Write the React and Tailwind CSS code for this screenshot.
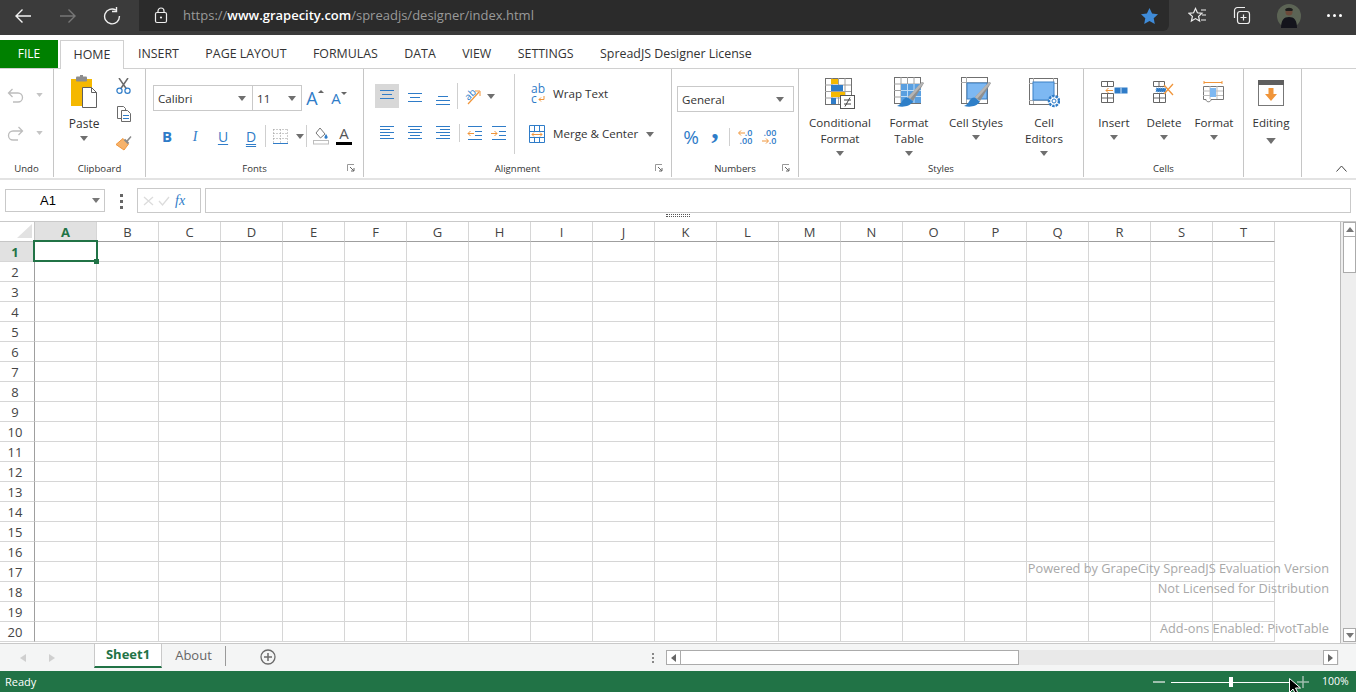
import React from 'react';

const BLUE = '#2f7cc8';
const ORANGE = '#f0953a';

const columns = ['A','B','C','D','E','F','G','H','I','J','K','L','M','N','O','P','Q','R','S','T'];
const rows = Array.from({ length: 20 }, (_, i) => i + 1);

const Caret = ({ w = 8, h = 5, color = '#6f6f6f' }) => (
    <svg width={w} height={h} viewBox="0 0 8 5" className="shrink-0"><path d="M0 0h8L4 5z" fill={color} /></svg>
);

const Lines = ({ ys, xs }) => (
    <svg width="16" height="18" viewBox="0 0 16 18">
        {ys.map((y, i) => (
            <path key={i} d={`M${xs[i][0]} ${y}.5H${xs[i][1]}`} stroke={BLUE} />
        ))}
    </svg>
);

const Launcher = () => (
    <svg width="8" height="8" viewBox="0 0 8 8" className="mb-1"><path d="M.5 7V.5H7" stroke="#999" fill="none" /><path d="M3 3l4 4M7 4v3H4" stroke="#666" fill="none" /></svg>
);

const VSep = ({ h = 'h-[26px]' }) => <div className={`w-px bg-[#cfcfcf] ${h}`} />;

// ribbon group with its bottom caption
function Group({ w, label, launcher, children }) {
    return (
        <div className={`${w} h-[108px] shrink-0 flex flex-col border-r border-[#c6c6c6]`}>
            <div className="h-[92px]">{children}</div>
            <div className="h-4 pt-px grid grid-cols-[1fr_auto_1fr] items-center text-[9.6px] text-[#333]">
                <span />
                <span>{label}</span>
                {launcher ? <span className="justify-self-end pr-2 flex"><Launcher /></span> : <span />}
            </div>
        </div>
    );
}

const TableGlyph = ({ children }) => (
    <svg width="32" height="32" viewBox="0 0 32 32">{children}</svg>
);

const GridLines = ({ x = 1, y = 1, w = 26, h = 26, cols = 4, rws = 4 }) => (
    <g fill="none">
        <rect x={x + 0.5} y={y + 0.5} width={w} height={h} stroke="#707070" />
        {Array.from({ length: cols - 1 }, (_, i) => <path key={i} d={`M${x + 0.5 + (w / cols) * (i + 1)} ${y}v${h}`} stroke="#a0a0a0" />)}
        {Array.from({ length: rws - 1 }, (_, i) => <path key={i} d={`M${x} ${y + 0.5 + (h / rws) * (i + 1)}h${w}`} stroke="#a0a0a0" />)}
    </g>
);

const Brush = () => (
    <g>
        <path d="M31 6l-2-1L15 20l5 4z" fill="#8f8f8f" />
        <path d="M31 6l-2-1L15 20l2 2z" fill="#b5b5b5" />
        <path d="M14.500 20.500c-2.500 0-4.500 2-5.500 4-1 2.500-3 3.500-5 4.500 6 1.500 13 .5 16-4.500z" fill="#2f7fc8" />
    </g>
);

const BigButton = ({ w, icon, lines }) => (
    <div className={`${w} flex flex-col items-center shrink-0`}>
        <div className="h-[32px] flex items-center justify-center mb-[6px]">{icon}</div>
        {lines.map(l => <div key={l} className="leading-4 whitespace-nowrap">{l}</div>)}
        <div className="mt-1 flex"><Caret /></div>
    </div>
);

const SmallCells = ({ w, icon, label }) => (
    <div className={`${w} flex flex-col items-center shrink-0`}>
        <div className="h-[22px] flex items-center justify-center mb-3">{icon}</div>
        <div className="leading-4">{label}</div>
        <div className="mt-1 flex"><Caret /></div>
    </div>
);

function BrowserBar() {
    return (
        <div className="h-[35px] bg-[#3b3b3b] flex items-start text-white">
            <div className="w-[139px] h-[31px] flex items-center shrink-0">
                <svg width="18" height="16" viewBox="0 0 18 16" className="ml-[14px]"><path d="M17 8H2M8.500 1.500L2 8l6.500 6.500" stroke="#f2f2f2" strokeWidth="1.400" fill="none" /></svg>
                <svg width="18" height="16" viewBox="0 0 18 16" className="ml-[27px]"><path d="M1 8h15M9.500 1.500L16 8l-6.500 6.500" stroke="#777" strokeWidth="1.400" fill="none" /></svg>
                <svg width="18" height="18" viewBox="0 0 18 18" className="ml-[26px]"><path d="M13 3.200A7.400 7.400 0 1 0 16.400 9" stroke="#eee" strokeWidth="1.400" fill="none" /><path d="M13.500 0v4.500H9" stroke="#eee" strokeWidth="1.400" fill="none" /></svg>
            </div>
            <div className="w-[1030px] h-[31px] bg-[#2b2b2b] rounded-br-md flex items-center shrink-0">
                <svg width="14" height="17" viewBox="0 0 14 17" className="ml-[15px]"><rect x="1.500" y="5.500" width="11" height="10" rx="1.500" stroke="#eee" fill="none" strokeWidth="1.200" /><path d="M4 5.500V4a3 3 0 0 1 6 0v1.500" stroke="#eee" fill="none" strokeWidth="1.200" /><circle cx="7" cy="10.500" r="1.100" fill="#eee" /></svg>
                <div className="ml-[15px] text-[13px] text-[#9a9a9a] whitespace-nowrap">
                    https://<span className="text-white font-semibold">www.grapecity.com</span>/spreadjs/designer/index.html
                </div>
                <svg width="17" height="16" viewBox="0 0 17 16" className="ml-auto mr-[11px]"><path d="M8.500 0l2.600 5.400 5.900.8-4.300 4.100 1.100 5.700-5.300-2.900-5.300 2.900 1.100-5.700L0 6.200l5.900-.8z" fill="#3f8bd8" /></svg>
            </div>
            <div className="flex-1 h-[31px] flex items-center">
                <svg width="19" height="18" viewBox="0 0 19 18" className="ml-[19px]"><path d="M7.500 1.500l1.900 4.300 4.600.5-3.400 3.100 1 4.600-4.100-2.400-4.100 2.400 1-4.600L1 6.300l4.600-.5zM13 3h5M14 8h4M13 13h5" stroke="#eee" strokeWidth="1.200" fill="none" /></svg>
                <svg width="18" height="19" viewBox="0 0 18 19" className="ml-[26px]"><path d="M12 1.500H4.500A3 3 0 0 0 1.500 4.500V12" stroke="#eee" strokeWidth="1.200" fill="none" /><rect x="4.500" y="5.500" width="12" height="12" rx="2.500" stroke="#eee" strokeWidth="1.200" fill="none" /><path d="M10.500 8.500v6M7.500 11.500h6" stroke="#eee" strokeWidth="1.200" /></svg>
                <svg width="24" height="24" viewBox="0 0 24 24" className="ml-[26px]">
                    <circle cx="12" cy="12" r="12" fill="#5c6455" />
                    <path d="M4 24c0-8 3-11 8-11s8 3 8 11z" fill="#14141c" />
                    <circle cx="12" cy="8" r="3.500" fill="#6b4a3a" />
                    <path d="M8 6c1-3 7-3 8 0l-1 1H9z" fill="#1c1c1c" />
                </svg>
                <div className="ml-[26px] flex gap-[3px]">
                    <span className="w-[3px] h-[3px] rounded-full bg-white" />
                    <span className="w-[3px] h-[3px] rounded-full bg-white" />
                    <span className="w-[3px] h-[3px] rounded-full bg-white" />
                </div>
            </div>
        </div>
    );
}

function RibbonTabs() {
    const tabs = ['INSERT', 'PAGE LAYOUT', 'FORMULAS', 'DATA', 'VIEW', 'SETTINGS', 'SpreadJS Designer License'];
    return (
        <div className="h-[34px] pt-[5px] flex items-end border-b border-[#d0d0d0] text-[12.4px] text-[#333]">
            <div className="w-[58px] h-[28px] bg-[#008000] text-white text-[12px] flex items-center justify-center">FILE</div>
            <div className="w-[64px] h-[29px] ml-[2px] -mb-px bg-white border border-b-0 border-[#d0d0d0] flex items-center justify-center">HOME</div>
            <div className="flex ml-[14px] gap-[26.4px] h-[28px] items-center whitespace-nowrap">
                {tabs.map(t => <span key={t}>{t}</span>)}
            </div>
        </div>
    );
}

function Ribbon() {
    return (
        <div className="flex h-[108px] text-[11.6px] text-[#333]">
            <Group w="w-[54px]" label="Undo">
                <div className="flex items-center h-4 mt-[18px] pl-[7px]">
                    <svg width="17" height="15" viewBox="0 0 17 15"><path d="M5.500 1L1.500 5l4 4M2 5h9a4.500 4.500 0 0 1 0 9H6" stroke="#bdbdbd" strokeWidth="1.300" fill="none" /></svg>
                    <span className="ml-[12px] flex"><Caret w={7} h={4} color="#c4c4c4" /></span>
                </div>
                <div className="flex items-center h-4 mt-[22px] pl-[7px]">
                    <svg width="17" height="15" viewBox="0 0 17 15"><path d="M11.500 1l4 4-4 4M15 5H6a4.500 4.500 0 0 0 0 9h5" stroke="#bdbdbd" strokeWidth="1.300" fill="none" /></svg>
                    <span className="ml-[12px] flex"><Caret w={7} h={4} color="#c4c4c4" /></span>
                </div>
            </Group>
            <Group w="w-[92px]" label="Clipboard">
                <div className="flex">
                    <div className="w-[60px] flex flex-col items-center pl-[1px]">
                        <svg width="27" height="33" viewBox="0 0 27 33" className="mt-[6px] ml-px">
                            <rect x="0" y="4" width="21" height="27" fill="#f5b800" />
                            <rect x="5" y="1.500" width="11" height="5" rx="1" fill="#8d8d8d" />
                            <rect x="9" y="0" width="3" height="3" fill="#8d8d8d" />
                            <path d="M11.500 12.500h9l5 5v15h-14z" fill="#fff" stroke="#5f5f5f" />
                            <path d="M20.500 12.500v5h5" fill="none" stroke="#5f5f5f" />
                        </svg>
                        <div className="mt-[8px] leading-4 text-[12px]">Paste</div>
                        <div className="mt-[4px] flex"><Caret /></div>
                    </div>
                    <div className="flex flex-col items-center w-[32px] pt-[9px] pr-[12px]">
                        <svg width="15" height="16" viewBox="0 0 15 16" className="shrink-0">
                            <path d="M3 0l7.500 11M12 0L4.500 11" stroke="#6b6b6b" strokeWidth="1.500" />
                            <circle cx="3.500" cy="12.800" r="2.600" fill="none" stroke={BLUE} strokeWidth="1.200" />
                            <circle cx="11.500" cy="12.800" r="2.600" fill="none" stroke={BLUE} strokeWidth="1.200" />
                        </svg>
                        <svg width="15" height="16" viewBox="0 0 15 16" className="mt-[12px] shrink-0">
                            <path d="M6.500 12.500h-5v-12h6l2 2v2" fill="#fff" stroke="#6b6b6b" />
                            <path d="M5.500 4.500h6l3 3v8h-9z" fill="#fff" stroke="#6b6b6b" />
                            <path d="M7 9.500h6M7 12.500h6" stroke={BLUE} />
                        </svg>
                        <svg width="17" height="17" viewBox="0 0 17 17" className="mt-[13px] shrink-0">
                            <path d="M11 6l4.500-5 1 1L12 7.500z" fill="#8a8a8a" />
                            <path d="M8 3.500l5.500 5.500L9 15 1 9.500z" fill="#f6b26b" stroke={ORANGE} />
                            <path d="M9.500 4.500l4 4" stroke="#8a8a8a" strokeWidth="2" />
                        </svg>
                    </div>
                </div>
            </Group>
            <Group w="w-[218px]" label="Fonts" launcher>
                <div className="flex items-center h-[26px] mt-4 ml-[7px]">
                    <div className="w-[100px] h-full border border-[#c9c9c9] flex items-center pl-1 pr-[6px] pt-px justify-between"><span>Calibri</span><Caret /></div>
                    <div className="w-[50px] h-full -ml-px border border-[#c9c9c9] flex items-center pl-1 pr-[5px] pt-px justify-between"><span>11</span><Caret /></div>
                    <div className="w-[24px] ml-px flex justify-center text-[#2f7cc8] text-[18px] leading-none">A<span className="w-0 h-0 border-x-[3px] border-x-transparent border-b-[3px] border-b-[#666] mt-px" /></div>
                    <div className="w-[24px] flex justify-center text-[#2f7cc8] text-[15px] leading-none">A<span className="w-0 h-0 border-x-[3px] border-x-transparent border-t-[3px] border-t-[#666] mt-px" /></div>
                </div>
                <div className="flex items-center h-[26px] mt-[12px] ml-[7px] text-[#2f7cc8]">
                    <span className="w-[28px] text-center font-bold text-[15px]">B</span>
                    <span className="w-[28px] text-center italic text-[14px] [font-family:'Liberation_Serif',serif]">I</span>
                    <span className="w-[28px] text-center text-[14px] underline underline-offset-2">U</span>
                    <span className="w-[28px] text-center text-[14px] underline decoration-double underline-offset-2">D</span>
                    <VSep h="h-[22px]" />
                    <span className="w-[28px] flex justify-center">
                        <svg width="15" height="15" viewBox="0 0 15 15"><path d="M.5 .5h14M.5 4.500h14M.5 9.500h14M.5 .5v14M7.500 .5v14M14.500 .5v14" stroke="#999" strokeDasharray="1 2" fill="none" /><path d="M0 14.500h15" stroke={BLUE} /></svg>
                    </span>
                    <span className="w-[12px] flex justify-center"><Caret /></span>
                    <VSep h="h-[22px]" />
                    <span className="w-[27px] flex justify-center">
                        <svg width="16" height="18" viewBox="0 0 16 18"><path d="M7 1l5 6-4.500 4L3 6z" fill="#fff" stroke="#777" /><path d="M13 7c1 1.500 1.500 2.500 1.500 3.200a1.500 1.500 0 0 1-3 0c0-.7.500-1.700 1.500-3.200z" fill={BLUE} /><rect x=".5" y="13.500" width="15" height="3.500" fill="#fff" stroke="#bdbdbd" /></svg>
                    </span>
                    <span className="w-[20px] flex flex-col items-center text-[#555] text-[15px] leading-[15px] -mt-px">A<span className="w-[16px] h-[3px] bg-black mt-px" /></span>
                </div>
            </Group>
            <Group w="w-[308px]" label="Alignment" launcher>
                <div className="flex">
                    <div className="w-[151px] shrink-0 border-r border-[#cfcfcf] h-[80px] mt-[5px] -mr-px">
                        <div className="flex items-center h-[24px] mt-[10px] ml-[9px]">
                            <span className="w-[28px] flex justify-center"><span className="w-6 h-6 bg-[#d8d8d8] flex items-center justify-center"><Lines ys={[3, 7, 11]} xs={[[1, 15], [3, 13], [1, 15]]} /></span></span>
                            <span className="w-[28px] flex justify-center"><Lines ys={[6, 10, 14]} xs={[[1, 15], [3, 13], [1, 15]]} /></span>
                            <span className="w-[28px] flex justify-center"><Lines ys={[9, 13, 17]} xs={[[3, 13], [1, 15], [1, 15]]} /></span>
                            <VSep />
                            <span className="w-[28px] flex justify-center">
                                <span className="relative w-[17px] h-[18px] flex items-center justify-center">
                                    <span className="-rotate-45 text-[#2f7cc8] text-[10px] leading-none -translate-x-[2px] -translate-y-[2px]">ab</span>
                                    <svg width="17" height="18" viewBox="0 0 17 18" className="absolute inset-0"><path d="M4 17L15 5" stroke={ORANGE} strokeWidth="1.200" /><path d="M11 4h5v5" stroke={ORANGE} fill="none" /></svg>
                                </span>
                            </span>
                            <span className="w-[10px] flex justify-center"><Caret /></span>
                        </div>
                        <div className="flex items-center h-[24px] mt-[13px] ml-[9px]">
                            <span className="w-[28px] flex justify-center"><Lines ys={[2, 5, 8, 11, 14]} xs={[[1, 15], [1, 11], [1, 15], [1, 11], [1, 15]]} /></span>
                            <span className="w-[28px] flex justify-center"><Lines ys={[2, 5, 8, 11, 14]} xs={[[1, 15], [3, 13], [1, 15], [3, 13], [1, 15]]} /></span>
                            <span className="w-[28px] flex justify-center"><Lines ys={[2, 5, 8, 11, 14]} xs={[[1, 15], [5, 15], [1, 15], [5, 15], [1, 15]]} /></span>
                            <span className="ml-[2px] flex"><VSep h="h-[18px]" /></span>
                            <span className="w-[24px] ml-[3px] flex justify-center">
                                <svg width="16" height="16" viewBox="0 0 16 16"><path d="M1 1.500h14M8 6.500h7M8 10.500h7M1 14.500h14" stroke={BLUE} /><path d="M7 8.500H1M3.500 6L1 8.500 3.500 11" stroke={ORANGE} fill="none" /></svg>
                            </span>
                            <span className="w-[24px] flex justify-center">
                                <svg width="16" height="16" viewBox="0 0 16 16"><path d="M1 1.500h14M8 6.500h7M8 10.500h7M1 14.500h14" stroke={BLUE} /><path d="M0 8.500h6M3.500 6L6 8.500 3.500 11" stroke={ORANGE} fill="none" /></svg>
                            </span>
                        </div>
                    </div>
                    <div className="flex-1 pl-[15px]">
                        <div className="flex items-center mt-[15px] h-[20px]">
                            <span className="w-[16px] pl-[2px] flex flex-col text-[#2f7cc8] text-[12px] leading-[10px]">
                                <span>ab</span>
                                <span className="flex items-center">c
                                    <svg width="7" height="6" viewBox="0 0 7 6" className="ml-px"><path d="M6 0v3.500H1M3 1.500L1 3.500l2 2" stroke={ORANGE} fill="none" /></svg>
                                </span>
                            </span>
                            <span className="ml-[8px]">Wrap Text</span>
                        </div>
                        <div className="flex items-center mt-[20px] h-[20px]">
                            <svg width="16" height="18" viewBox="0 0 16 18"><path d="M.5 .5h15v17H.5zM.5 6.500h15M.5 12.500h15M5.500 .5v6M10.500 .5v6M5.500 12.500v5M10.500 12.500v5" stroke={BLUE} fill="none" /><path d="M3 9.500h10M5 7.500l-2 2 2 2M11 7.500l2 2-2 2" stroke={ORANGE} fill="none" /></svg>
                            <span className="ml-[8px]">Merge &amp; Center</span>
                            <span className="ml-[8px] flex"><Caret /></span>
                        </div>
                    </div>
                </div>
            </Group>
            <Group w="w-[127px]" label="Numbers" launcher>
                <div className="w-[117px] h-[26px] ml-[5px] mt-[17px] border border-[#c9c9c9] flex items-center justify-between pl-1 pr-[9px] pt-px"><span>General</span><Caret /></div>
                <div className="flex items-center h-[22px] mt-[14px] ml-[7px] text-[#2f7cc8]">
                    <span className="w-[24px] text-center text-[19px] leading-none">%</span>
                    <span className="w-[24px] h-[22px] text-center font-bold text-[30px] leading-[22px] -translate-y-[9px] [font-family:'Liberation_Serif',serif]">,</span>
                    <span className="ml-[2px] flex"><VSep h="h-[18px]" /></span>
                    <span className="w-[30px] flex justify-center">
                        <span className="flex flex-col text-[9px] leading-[8px] font-semibold items-end">
                            <span className="flex items-center">
                                <svg width="7" height="6" viewBox="0 0 7 6"><path d="M7 3H1M3 .5L.5 3 3 5.500" stroke={ORANGE} fill="none" /></svg>
                                .0
                            </span>
                            <span>.00</span>
                        </span>
                    </span>
                    <span className="w-[18px] flex justify-center">
                        <span className="flex flex-col text-[9px] leading-[8px] font-semibold items-end">
                            <span>.00</span>
                            <span className="flex items-center">
                                <svg width="7" height="6" viewBox="0 0 7 6"><path d="M0 3h6M4 .5L6.500 3 4 5.500" stroke={ORANGE} fill="none" /></svg>
                                .0
                            </span>
                        </span>
                    </span>
                </div>
            </Group>
            <Group w="w-[285px]" label="Styles">
                <div className="flex pt-[8px] pl-[4px]">
                    <BigButton w="w-[74px]" lines={['Conditional', 'Format']} icon={
                        <TableGlyph>
                            <GridLines x={1} y={1} w={26} h={26} />
                            <rect x="7" y="2" width="7" height="5" fill="#f5b800" />
                            <rect x="7" y="8" width="12" height="6" fill={BLUE} />
                            <rect x="7" y="15" width="14" height="5" fill="#f5b800" />
                            <rect x="7" y="21" width="5" height="6" fill={BLUE} />
                            <rect x="16.500" y="18.500" width="14" height="13" fill="#fff" stroke="#555" />
                            <path d="M20 23h7M20 27h7M26 20.500L21 29.500" stroke="#444" fill="none" />
                        </TableGlyph>
                    } />
                    <BigButton w="w-[64px]" lines={['Format', 'Table']} icon={
                        <TableGlyph>
                            <GridLines x={1} y={0} w={26} h={26} />
                            <rect x="8" y="7" width="20" height="19" fill="#5a9fe0" />
                            <path d="M8 13.500h20M8 19.500h20M14.500 7v19M21 7v19" stroke="#bcdcf8" />
                            <Brush />
                        </TableGlyph>
                    } />
                    <BigButton w="w-[70px]" lines={['Cell Styles']} icon={
                        <TableGlyph>
                            <GridLines x={1} y={0} w={26} h={26} cols={1} rws={1} />
                            <path d="M1 5.500h26M6.500 0v26" stroke="#aaa" />
                            <rect x="7" y="6" width="20" height="16" fill="#7db8f2" stroke="#3a80c6" />
                            <Brush />
                        </TableGlyph>
                    } />
                    <BigButton w="w-[66px]" lines={['Cell', 'Editors']} icon={
                        <TableGlyph>
                            <GridLines x={1} y={1} w={28} h={26} cols={1} rws={1} />
                            <path d="M1 6.500h28M5.500 1v26M1 23.500h28M25.500 1v26" stroke="#aaa" />
                            <rect x="5" y="5" width="21" height="18" fill="#7db8f2" stroke="#3a80c6" />
                            <circle cx="26" cy="24" r="5" fill="#fff" stroke={BLUE} strokeWidth="2.500" strokeDasharray="2.500 1" />
                            <circle cx="26" cy="24" r="2" fill="#fff" stroke={BLUE} />
                        </TableGlyph>
                    } />
                </div>
            </Group>
            <Group w="w-[160px]" label="Cells">
                <div className="flex pt-[12px] pl-[5px]">
                    <SmallCells w="w-[50px]" label="Insert" icon={
                        <svg width="27" height="22" viewBox="0 0 27 22">
                            <path d="M.5 .5h12v5H.5zM6.500 .5v5M.5 12.500h12v9H.5zM.5 17h12M6.500 12.500v9" stroke="#666" fill="none" />
                            <rect x="13.500" y="6.500" width="13" height="6" fill={BLUE} />
                            <path d="M20 6.500v6" stroke="#cfe3f7" />
                            <path d="M12 9.500H5M7.500 7L5 9.500 7.500 12" stroke={ORANGE} fill="none" />
                        </svg>
                    } />
                    <SmallCells w="w-[50px]" label="Delete" icon={
                        <svg width="22" height="22" viewBox="0 0 22 22">
                            <path d="M.5 .5h11v5H.5zM6 .5v5M.5 12.500h12v9H.5zM.5 17h12M6.500 12.500v9" stroke="#666" fill="none" />
                            <rect x="3" y="7" width="10" height="4" fill={BLUE} stroke="#9cc4ec" strokeDasharray="1 1" />
                            <path d="M11 4l9 10M20 3l-9 10" stroke={ORANGE} strokeWidth="1.300" />
                        </svg>
                    } />
                    <SmallCells w="w-[50px]" label="Format" icon={
                        <svg width="22" height="22" viewBox="0 0 22 22">
                            <path d="M1 1.500h18M1 0v3M19 0v3" stroke={ORANGE} fill="none" />
                            <path d="M.5 5.500h20v13H8c0 3-5 3-5 0H.5z" fill="#fff" stroke="#777" />
                            <path d="M7 5v13M14 5v13M0 10h20M0 14.500h20" stroke="#bbb" />
                            <rect x="7" y="7" width="6" height="9" fill="#7db8f2" />
                        </svg>
                    } />
                </div>
            </Group>
            <Group w="w-[58px]" label="">
                <div className="flex flex-col items-center pt-[11px] pr-[3px]">
                    <svg width="26" height="26" viewBox="0 0 26 26">
                        <rect x=".5" y=".5" width="25" height="25" fill="#fff" stroke="#777" />
                        <rect x="0" y="0" width="26" height="5" fill="#5f5f5f" />
                        <path d="M10.500 8h5v6H19l-6 7-6-7h3.500z" fill={ORANGE} />
                    </svg>
                    <div className="mt-[9px] leading-4">Editing</div>
                    <div className="mt-[7px] flex"><Caret w={10} h={6} /></div>
                </div>
            </Group>
            <div className="flex-1 flex justify-end items-end pb-[5px] pr-[9px]">
                <svg width="11" height="7" viewBox="0 0 11 7"><path d="M.5 6.500l5-5.500 5 5.500" stroke="#444" fill="none" /></svg>
            </div>
        </div>
    );
}

function FormulaBar() {
    return (
        <div className="h-[33px] pt-[8px] border-t-2 border-[#e3e3e3] mt-px flex items-start text-[13px]">
            <div className="w-[100px] h-[23px] ml-[5px] mt-px border border-[#c9c9c9] flex items-center justify-between pr-1">
                <span className="w-[84px] text-center text-black [font-family:'Liberation_Sans',sans-serif]">A1</span>
                <Caret color="#777" />
            </div>
            <div className="w-[32px] flex flex-col items-center gap-[3px] mt-[6px]">
                <span className="w-[3px] h-[3px] bg-[#666]" />
                <span className="w-[3px] h-[3px] bg-[#666]" />
                <span className="w-[3px] h-[3px] bg-[#666]" />
            </div>
            <div className="w-[64px] h-[25px] border border-[#c9c9c9] flex items-center pl-[5px] gap-[4px]">
                <svg width="11" height="10" viewBox="0 0 11 10"><path d="M1 1l9 8M10 1l-9 8" stroke="#dcdcdc" strokeWidth="1.300" /></svg>
                <svg width="12" height="10" viewBox="0 0 12 10"><path d="M1 5l3.500 4L11 1" stroke="#dcdcdc" strokeWidth="1.300" fill="none" /></svg>
                <span className="italic text-[#2f7cc8] text-[14px] ml-px [font-family:'Liberation_Serif',serif]">fx</span>
            </div>
            <div className="w-[1146px] h-[25px] ml-[4px] border border-[#c9c9c9]" />
        </div>
    );
}

function Sheet() {
    return (
        <div className="relative flex-1 h-[421px] overflow-hidden border-r border-[#bcbcbc]">
            <div className="grid grid-cols-[35px_repeat(20,62px)] auto-rows-[20px] text-[#444]">
                <div className="h-5 border-r border-b border-[#c6c6c6] bg-white flex items-end justify-end pr-[2px] pb-[3px]">
                    <svg width="15" height="14" viewBox="0 0 15 14"><path d="M15 0v14H0z" fill="#e2e2e2" /></svg>
                </div>
                {columns.map((c, i) => (
                    <div key={c} className={`h-5 pt-[2px] flex items-center justify-center text-[13px] border-r border-b ${i === 0 ? 'bg-[#e1e1e1] font-bold text-[#217346] border-b-[#9f9f9f] border-r-[#d6d6d6]' : 'border-b-[#9f9f9f] border-r-[#d6d6d6]'}`}>{c}</div>
                ))}
                {rows.map(r => (
                    <React.Fragment key={r}>
                        <div className={`h-5 pt-[2px] flex items-center justify-center text-[13px] pr-[4px] border-r border-b border-r-[#9f9f9f] border-b-[#d6d6d6] ${r === 1 ? 'bg-[#e1e1e1] font-bold text-[#217346]' : ''}`}>{r}</div>
                        {columns.map(c => (
                            <div key={c} className="h-5 relative border-r border-b border-[#d6d6d6]">
                                {r === 1 && c === 'A' && (
                                    <div className="absolute -left-[2px] -top-[2px] w-[65px] h-[22px] border-2 border-[#217346] z-10">
                                        <span className="absolute -right-[3px] -bottom-[4px] w-[5px] h-[5px] bg-[#217346]" />
                                    </div>
                                )}
                            </div>
                        ))}
                    </React.Fragment>
                ))}
            </div>
            <div className="absolute right-[11px] top-[336px] text-right text-[12.75px] leading-5 text-[#a8a8a8]">
                <div>Powered by GrapeCity SpreadJS Evaluation Version</div>
                <div>Not Licensed for Distribution</div>
                <div className="h-5" />
                <div>Add-ons Enabled: PivotTable</div>
            </div>
        </div>
    );
}

function VScroll() {
    return (
        <div className="w-[15px] h-[421px] bg-[#eeeeee] flex flex-col items-end shrink-0">
            <div className="w-[13px] h-[15px] bg-white border border-[#ababab] flex items-center justify-center">
                <svg width="8" height="5" viewBox="0 0 8 5"><path d="M4 0l4 5H0z" fill="#777" /></svg>
            </div>
            <div className="w-[13px] h-[36px] bg-white border border-[#ababab] border-t-0" />
            <div className="flex-1" />
            <div className="w-[13px] h-[14px] bg-white border border-[#ababab] flex items-center justify-center mb-px">
                <Caret color="#777" />
            </div>
        </div>
    );
}

function TabBar() {
    return (
        <div className="h-[28px] bg-[#f4f5f5] border-t border-[#c9c9c9] flex items-start text-[13px]">
            <div className="w-[94px] h-full flex items-center pl-[20px] gap-[23px] shrink-0">
                <svg width="6" height="8" viewBox="0 0 6 8"><path d="M6 0v8L0 4z" fill="#cfcfcf" /></svg>
                <svg width="6" height="8" viewBox="0 0 6 8"><path d="M0 0v8l6-4z" fill="#cfcfcf" /></svg>
            </div>
            <div className="w-[68px] h-[24px] bg-white border-l border-r border-b-2 border-[#c9c9c9] border-b-[#217346] flex items-center justify-center font-bold text-[#217346] text-[13px]">Sheet1</div>
            <div className="w-[64px] h-[20px] mt-[2px] flex items-center justify-center text-[#666] border-r border-[#9a9a9a]">About</div>
            <div className="ml-[34px] mt-[5px] flex">
                <svg width="16" height="16" viewBox="0 0 16 16"><circle cx="8" cy="8" r="7" stroke="#6b6b6b" strokeWidth="1.300" fill="none" /><path d="M8 4v8M4 8h8" stroke="#6b6b6b" strokeWidth="1.500" /></svg>
            </div>
            <div className="ml-[376px] mt-[9px] flex flex-col gap-[2px]">
                <span className="w-[2px] h-[2px] bg-[#888]" />
                <span className="w-[2px] h-[2px] bg-[#888]" />
                <span className="w-[2px] h-[2px] bg-[#888]" />
            </div>
            <div className="w-[673px] h-[15px] ml-[12px] mt-[6px] bg-[#e9e9e9] flex">
                <div className="w-[15px] h-[15px] bg-white border border-[#ababab] flex items-center justify-center">
                    <svg width="5" height="8" viewBox="0 0 5 8"><path d="M5 0v8L0 4z" fill="#666" /></svg>
                </div>
                <div className="w-[338px] bg-white border border-l-0 border-[#ababab]" />
                <div className="flex-1" />
                <div className="w-[15px] h-[15px] bg-white border border-[#ababab] flex items-center justify-center mr-px">
                    <svg width="5" height="8" viewBox="0 0 5 8"><path d="M0 0v8l5-4z" fill="#666" /></svg>
                </div>
            </div>
        </div>
    );
}

function StatusBar() {
    return (
        <div className="relative h-[21px] bg-[#217346] text-white text-[11px] flex items-center pl-[5px] pt-px">
            <span>Ready</span>
            <div className="ml-auto flex items-center pr-[8px]">
                <span className="w-[12px] h-[2px] bg-[#9fbfae]" />
                <div className="w-[120px] h-px bg-white ml-[6px] flex items-center justify-center">
                    <span className="w-[4px] h-[10px] bg-white" />
                </div>
                <svg width="12" height="12" viewBox="0 0 12 12" className="ml-[6px]"><path d="M6 0v12M0 6h12" stroke="#9fbfae" strokeWidth="1.500" /></svg>
                <span className="ml-[13px] w-[26px] text-[10.5px]">100%</span>
            </div>
            {/* mouse pointer caught in the capture */}
            <svg width="12" height="16" viewBox="0 0 12 16" className="absolute left-[1289px] top-[7px]">
                <path d="M.5 .5v14l3.500-3.500 2.500 5 2.500-1-2.500-5h5z" fill="#000" stroke="#fff" />
            </svg>
        </div>
    );
}

export default function App() {
    return (
        <div className="w-[1356px] h-[692px] overflow-hidden bg-white flex flex-col [font-family:'Open_Sans','Noto_Sans',sans-serif]">
            <BrowserBar />
            <RibbonTabs />
            <Ribbon />
            <FormulaBar />
            {/* splitter between formula bar and sheet */}
            <div className="h-[10px] flex justify-center items-start pt-[3px]">
                <div className="w-[24px] h-[3px] border-y border-dotted border-[#555]" />
            </div>
            <div className="flex border-t border-[#c9c9c9]">
                <Sheet />
                <VScroll />
            </div>
            <TabBar />
            <StatusBar />
        </div>
    );
}
